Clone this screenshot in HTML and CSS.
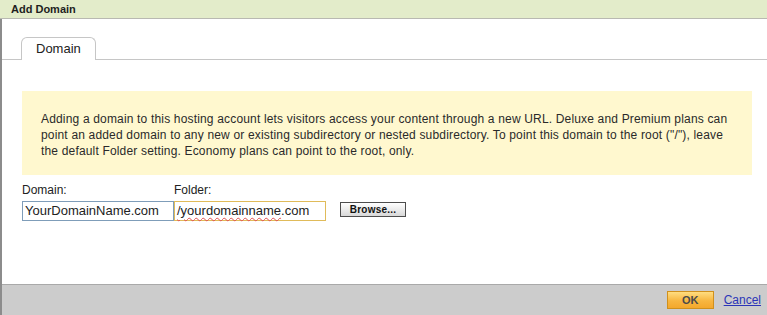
FILE: index.html
```html
<!DOCTYPE html>
<html>
<head>
<meta charset="utf-8">
<link rel="stylesheet" href="styles.css">
</head>
<body>
<div class="dialog">
  <div class="header">Add Domain</div>
  <div class="main">
    <div class="tabs">
      <div class="tab">Domain</div>
    </div>
    <div class="content">
      <div class="info">Adding a domain to this hosting account lets visitors access your content through a new URL. Deluxe and Premium plans can point an added domain to any new or existing subdirectory or nested subdirectory. To point this domain to the root ("/"), leave the default Folder setting. Economy plans can point to the root, only.</div>
      <div class="form">
        <div class="field">
          <label class="label">Domain:</label>
          <div class="input">YourDomainName.com</div>
        </div>
        <div class="field">
          <label class="label">Folder:</label>
          <div class="input focused"><span class="spell">/yourdomainname</span>.com</div>
        </div>
        <div class="browse">Browse...</div>
      </div>
    </div>
    <div class="footer">
      <div class="ok">OK</div>
      <a class="cancel" href="#">Cancel</a>
    </div>
  </div>
</div>
</body>
</html>
```
FILE: styles.css
```css
* { box-sizing: border-box; }
html, body { margin: 0; padding: 0; }
body {
  width: 767px;
  height: 315px;
  overflow: hidden;
  background: #fff;
  font-family: "Liberation Sans", Arial, sans-serif;
  color: #222;
}
.dialog {
  display: flex;
  flex-direction: column;
  height: 315px;
}
.header {
  height: 19px;
  background: #e3ecca;
  border-bottom: 1px solid #b9b9b2;
  font-size: 11px;
  font-weight: bold;
  color: #1e1e1e;
  padding: 2px 0 0 11px;
  line-height: 14px;
}
.main {
  flex: 1;
  display: flex;
  flex-direction: column;
  border-left: 2px solid #8c8c8c;
}
.tabs {
  padding: 18px 0 0 19px;
  border-bottom: 1px solid #c6c6c6;
  display: flex;
}
.tab {
  height: 23px;
  margin-bottom: -1px;
  background: #fff;
  border: 1px solid #c6c6c6;
  border-bottom: none;
  border-radius: 6px 6px 0 0;
  padding: 3px 14px 0 14px;
  font-size: 13px;
  line-height: 16px;
  color: #222;
}
.content {
  flex: 1;
  padding: 31px 15px 0 20px;
}
.info {
  background: #fff8cf;
  height: 84px;
  padding: 20px 19px 0 19px;
  font-size: 12px;
  line-height: 16px;
  letter-spacing: 0.17px;
  color: #2a2a2a;
}
.form {
  display: flex;
  align-items: flex-end;
  margin-top: 8px;
}
.field {
  display: flex;
  flex-direction: column;
}
.label {
  font-size: 12px;
  line-height: 14px;
  color: #222;
  margin-bottom: 4px;
}
.input {
  width: 152px;
  height: 20px;
  border: 1px solid #7f9db9;
  font-size: 13px;
  line-height: 18px;
  padding-left: 2px;
  color: #222;
}
.input.focused {
  border-color: #e0bb5a;
}
.spell {
  text-decoration: underline wavy #e05050;
  text-decoration-thickness: 1px;
  text-underline-offset: 2px;
}
.browse {
  margin: 0 0 4px 14px;
  width: 66px;
  height: 15px;
  border: 1px solid #4d4d4d;
  background: linear-gradient(#ffffff, #d8d8d8);
  font-size: 10px;
  font-weight: bold;
  line-height: 13px;
  text-align: center;
  color: #111;
  letter-spacing: 0.2px;
}
.footer {
  height: 31px;
  background: #cccccc;
  border-top: 1px solid #a9a9a9;
  display: flex;
  justify-content: flex-end;
  align-items: center;
  padding: 0 6px 0 0;
}
.ok {
  width: 47px;
  height: 18px;
  background: linear-gradient(#ffdd80, #f7b640 55%, #f4a82c);
  border: 1px solid #d0901c;
  font-size: 11px;
  font-weight: bold;
  line-height: 16px;
  text-align: center;
  color: #4a4a4a;
  margin-right: 10px;
}
.cancel {
  font-size: 12px;
  color: #2b35b8;
  text-decoration: underline;
}
```
